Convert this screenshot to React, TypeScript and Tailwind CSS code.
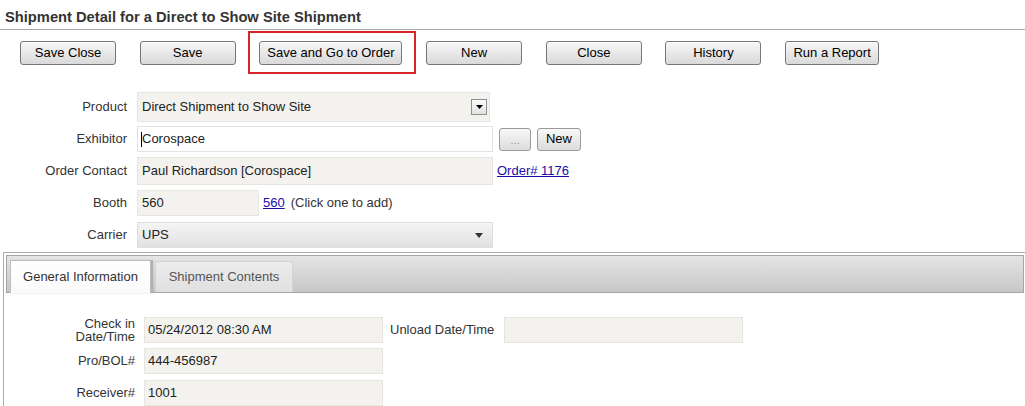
import React from "react";

const font = { fontFamily: '"Liberation Sans", Arial, sans-serif' };

function Btn({ children, w }: { children: React.ReactNode; w: string }) {
  return (
    <div
      className={`${w} h-[24px] flex items-center justify-center rounded-[3px] border border-[#767676] bg-gradient-to-b from-[#f7f7f7] to-[#d9d9d9] text-[13px] text-black shadow-[inset_0_1px_0_#ffffff]`}
    >
      {children}
    </div>
  );
}

function Label({ children, w = "w-[127px]" }: { children: React.ReactNode; w?: string }) {
  return <div className={`${w} shrink-0 text-right text-[13px] text-[#333] pr-0`}>{children}</div>;
}

function Field({
  w,
  h = "h-[27px]",
  children,
  white,
}: {
  w: string;
  h?: string;
  children?: React.ReactNode;
  white?: boolean;
}) {
  return (
    <div
      className={`${w} ${h} relative flex items-center pl-[4px] text-[13px] text-[#222] border ${
        white ? "bg-white border-[#e2e2e2]" : "bg-[#f3f2ee] border-[#e6e5e0]"
      }`}
    >
      {children}
    </div>
  );
}

function SmallBtn({ children, w }: { children: React.ReactNode; w: string }) {
  return (
    <div
      className={`${w} h-[23px] flex items-center justify-center rounded-[3px] border border-[#9a9a9a] bg-gradient-to-b from-[#f8f8f8] to-[#dcdcdc] text-[13px]`}
    >
      {children}
    </div>
  );
}

export default function App() {
  return (
    <div className="w-[1025px] h-[406px] overflow-hidden bg-white" style={font}>
      {/* Title */}
      <div className="h-[30px] border-b border-[#a8a8a8] pl-[5px] pt-[7px] text-[14.7px] font-bold leading-[20px] text-[#333]">
        Shipment Detail for a Direct to Show Site Shipment
      </div>

      {/* Buttons */}
      <div className="mt-[11px] flex gap-[23.7px] pl-[20px]">
        <Btn w="w-[96px]">Save Close</Btn>
        <Btn w="w-[96px]">Save</Btn>
        <div className="relative">
          <Btn w="w-[143px]">Save and Go to Order</Btn>
          <div className="absolute left-[-11px] right-[-14px] top-[-10px] bottom-[-9px] border-2 border-[#d7252b]" />
        </div>
        <Btn w="w-[96px]">New</Btn>
        <Btn w="w-[96px]">Close</Btn>
        <Btn w="w-[96px]">History</Btn>
        <Btn w="w-[94px]">Run a Report</Btn>
      </div>

      {/* Form */}
      <div className="mt-[26px] flex flex-col">
        <div className="h-[32px] flex items-center gap-[10px]">
          <Label>Product</Label>
          <Field w="w-[353px]" h="h-[30px]">
            Direct Shipment to Show Site
            <div className="absolute right-[2px] top-[6px] w-[16px] h-[16px] border border-[#8f8f8f] bg-gradient-to-b from-[#fbfbfb] to-[#e2e2e2] flex items-center justify-center">
              <svg width="7" height="4" viewBox="0 0 7 4">
                <path d="M0 0 L7 0 L3.5 4 Z" fill="#000" />
              </svg>
            </div>
          </Field>
        </div>
        <div className="h-[32px] flex items-center gap-[10px]">
          <Label>Exhibitor</Label>
          <Field w="w-[356px]" h="h-[26px]" white>
            <span className="absolute left-[3px] top-[5px] w-[1px] h-[15px] bg-black" />
            Corospace
          </Field>
          <div className="flex gap-[6px] ml-[-4px]">
            <SmallBtn w="w-[32px]">
              <span className="text-[#999] text-[11px] mt-[2px]">...</span>
            </SmallBtn>
            <SmallBtn w="w-[44px]">New</SmallBtn>
          </div>
        </div>
        <div className="h-[32px] flex items-center gap-[10px]">
          <Label>Order Contact</Label>
          <Field w="w-[356px]" h="h-[28px]">
            Paul Richardson [Corospace]
          </Field>
          <a className="ml-[-6px] text-[13px] text-[#1a0dab] underline">Order# 1176</a>
        </div>
        <div className="h-[32px] flex items-center gap-[10px]">
          <Label>Booth</Label>
          <Field w="w-[122px]" h="h-[26px]">
            560
          </Field>
          <div className="ml-[-6px] flex text-[13px]">
            <a className="text-[#1a0dab] underline">560</a>
            <span className="ml-[6px] text-[#333]">(Click one to add)</span>
          </div>
        </div>
        <div className="h-[32px] flex items-center gap-[10px]">
          <Label>Carrier</Label>
          <div className="w-[356px] h-[26px] relative flex items-center pl-[4px] text-[13px] text-[#222] border border-[#dedede] bg-gradient-to-b from-[#f4f4f4] to-[#e2e2e2]">
            UPS
            <svg className="absolute right-[9px] top-[10px]" width="8" height="5" viewBox="0 0 8 5">
              <path d="M0 0 L8 0 L4 5 Z" fill="#333" />
            </svg>
          </div>
        </div>
      </div>

      {/* Tab panel */}
      <div className="mt-[1px] ml-[3px] border-t border-l border-[#ababab] pt-[2px] pl-[2px] h-[200px]">
        <div className="h-[38px] mr-[1px] border border-[#a5a5a5] bg-gradient-to-b from-[#e5e5e5] to-[#c7c7c7] flex items-end pl-[3px] gap-[4px]">
          <div className="relative w-[141px] h-[33px] mb-[-1px] border border-b-0 border-[#bdbdbd] bg-gradient-to-b from-[#ffffff] to-[#fafafa] shadow-[2px_0_1px_#b0b0b0] flex items-center justify-center text-[13px] text-[#333]">
            General Information
          </div>
          <div className="w-[138px] h-[31px] border border-b-0 border-[#d2d2d2] bg-gradient-to-b from-[#ececec] to-[#e0e0e0] flex items-center justify-center text-[13px] text-[#555]">
            Shipment Contents
          </div>
        </div>

        <div className="mt-[24px] flex flex-col gap-[5px]">
          <div className="flex items-center h-[26px]">
            <div className="w-[131px] text-right text-[13px] leading-[13px] text-[#333] ml-[-2px]">
              Check in
              <br />
              Date/Time
            </div>
            <div className="ml-[9px] w-[239px] h-[26px] flex items-center pl-[3px] text-[13px] text-[#222] bg-[#f3f2ee] border border-[#e6e5e0]">
              05/24/2012 08:30 AM
            </div>
            <div className="ml-[7px] w-[114px] text-[13px] text-[#333]">Unload Date/Time</div>
            <div className="w-[239px] h-[26px] bg-[#f3f2ee] border border-[#e6e5e0]" />
          </div>
          <div className="flex items-center h-[26px]">
            <div className="w-[131px] text-right text-[13px] text-[#333] ml-[-2px]">Pro/BOL#</div>
            <div className="ml-[9px] w-[239px] h-[26px] flex items-center pl-[3px] text-[13px] text-[#222] bg-[#f3f2ee] border border-[#e6e5e0]">
              444-456987
            </div>
          </div>
          <div className="flex items-center h-[26px] mt-[1px]">
            <div className="w-[131px] text-right text-[13px] text-[#333] ml-[-2px]">Receiver#</div>
            <div className="ml-[9px] w-[239px] h-[26px] flex items-center pl-[3px] text-[13px] text-[#222] bg-[#f3f2ee] border border-[#e6e5e0]">
              1001
            </div>
          </div>
        </div>
      </div>
    </div>
  );
}
